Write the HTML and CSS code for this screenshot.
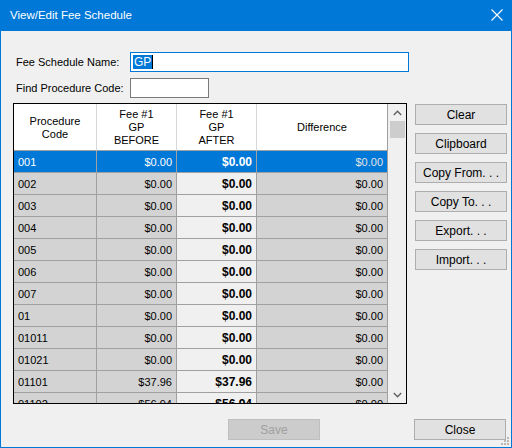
FILE: index.html
```html
<!DOCTYPE html>
<html>
<head>
<meta charset="utf-8">
<link rel="stylesheet" href="styles.css">
</head>
<body>
<div class="window">
  <div class="titlebar">
    <span class="title">View/Edit Fee Schedule</span>
    <svg class="close-x" width="12" height="12" viewBox="0 0 12 12"><path d="M0.5 0.5 L11.5 11.5 M11.5 0.5 L0.5 11.5" stroke="#fff" stroke-width="1.1" fill="none"/></svg>
  </div>
  <div class="content">
    <div class="field-row">
      <span class="label">Fee Schedule Name:</span>
      <div class="textbox focused wide"><span class="sel">GP</span><span class="caret"></span></div>
    </div>
    <div class="field-row second">
      <span class="label">Find Procedure Code:</span>
      <div class="textbox narrow"></div>
    </div>
    <div class="main">
      <div class="grid">
        <div class="table">
          <div class="row head">
            <div class="c c1">Procedure<br>Code</div>
            <div class="c c2">Fee #1<br>GP<br>BEFORE</div>
            <div class="c c3">Fee #1<br>GP<br>AFTER</div>
            <div class="c c4">Difference</div>
          </div>
          <div class="row data selected"><div class="c c1">001</div><div class="c c2">$0.00</div><div class="c c3">$0.00</div><div class="c c4">$0.00</div></div>
          <div class="row data"><div class="c c1">002</div><div class="c c2">$0.00</div><div class="c c3">$0.00</div><div class="c c4">$0.00</div></div>
          <div class="row data"><div class="c c1">003</div><div class="c c2">$0.00</div><div class="c c3">$0.00</div><div class="c c4">$0.00</div></div>
          <div class="row data"><div class="c c1">004</div><div class="c c2">$0.00</div><div class="c c3">$0.00</div><div class="c c4">$0.00</div></div>
          <div class="row data"><div class="c c1">005</div><div class="c c2">$0.00</div><div class="c c3">$0.00</div><div class="c c4">$0.00</div></div>
          <div class="row data"><div class="c c1">006</div><div class="c c2">$0.00</div><div class="c c3">$0.00</div><div class="c c4">$0.00</div></div>
          <div class="row data"><div class="c c1">007</div><div class="c c2">$0.00</div><div class="c c3">$0.00</div><div class="c c4">$0.00</div></div>
          <div class="row data"><div class="c c1">01</div><div class="c c2">$0.00</div><div class="c c3">$0.00</div><div class="c c4">$0.00</div></div>
          <div class="row data"><div class="c c1">01011</div><div class="c c2">$0.00</div><div class="c c3">$0.00</div><div class="c c4">$0.00</div></div>
          <div class="row data"><div class="c c1">01021</div><div class="c c2">$0.00</div><div class="c c3">$0.00</div><div class="c c4">$0.00</div></div>
          <div class="row data"><div class="c c1">01101</div><div class="c c2">$37.96</div><div class="c c3">$37.96</div><div class="c c4">$0.00</div></div>
          <div class="row data"><div class="c c1">01102</div><div class="c c2">$56.94</div><div class="c c3">$56.94</div><div class="c c4">$0.00</div></div>
        </div>
        <div class="scrollbar">
          <div class="arrow"><svg width="9" height="6" viewBox="0 0 9 6"><path d="M0.8 5 L4.5 1.3 L8.2 5" stroke="#606060" stroke-width="1.4" fill="none"/></svg></div>
          <div class="thumb"></div>
          <div class="track"></div>
          <div class="arrow"><svg width="9" height="6" viewBox="0 0 9 6"><path d="M0.8 1 L4.5 4.7 L8.2 1" stroke="#606060" stroke-width="1.4" fill="none"/></svg></div>
        </div>
      </div>
      <div class="side">
        <div class="btn">Clear</div>
        <div class="btn">Clipboard</div>
        <div class="btn">Copy From. . .</div>
        <div class="btn">Copy To. . .</div>
        <div class="btn">Export. . .</div>
        <div class="btn">Import. . .</div>
      </div>
    </div>
    <div class="bottom">
      <div class="btn disabled">Save</div>
      <div class="btn">Close</div>
    </div>
  </div>
  <svg class="grip" width="9" height="9" viewBox="0 0 9 9" fill="#b8b8b8">
    <rect x="6" y="0" width="2" height="2"/>
    <rect x="3" y="3" width="2" height="2"/><rect x="6" y="3" width="2" height="2"/>
    <rect x="0" y="6" width="2" height="2"/><rect x="3" y="6" width="2" height="2"/><rect x="6" y="6" width="2" height="2"/>
  </svg>
</div>
</body>
</html>
```
FILE: styles.css
```css
html, body {
  margin: 0;
  padding: 0;
  background: #f0f0f0;
}
.window {
  position: relative;
  width: 512px;
  height: 448px;
  box-sizing: border-box;
  border: 1px solid #0078d7;
  border-top: 0;
  background: #f0f0f0;
  font-family: "Liberation Sans", Arial, sans-serif;
  font-size: 11px;
  color: #000;
  overflow: hidden;
}
.titlebar {
  height: 31px;
  background: #0078d7;
  display: flex;
  align-items: center;
  justify-content: space-between;
  padding: 0 8px 0 9px;
  color: #fff;
}
.title {
  font-size: 11.5px;
  padding-bottom: 1px;
}
.close-x {
  display: block;
  margin-top: -1px;
}
.content {
  padding: 21px 0 0 12px;
}
.field-row {
  display: flex;
  align-items: center;
  height: 20px;
  padding-left: 3px;
}
.field-row.second {
  margin-top: 6px;
}
.label {
  width: 114px;
  flex: none;
}
.textbox {
  box-sizing: border-box;
  height: 20px;
  border: 1px solid #7a7a7a;
  background: #fff;
  display: flex;
  align-items: center;
  padding-left: 2px;
}
.textbox.focused {
  border-color: #0078d7;
}
.textbox.wide {
  width: 279px;
}
.textbox.narrow {
  width: 79px;
}
.sel {
  background: #0078d7;
  color: #fff;
  font-size: 12px;
  line-height: 14px;
  padding: 0 1px;
}
.caret {
  width: 1px;
  height: 14px;
  background: #000;
}
.main {
  display: flex;
  margin-top: 5px;
  gap: 8px;
}
.grid {
  box-sizing: border-box;
  width: 394px;
  height: 301px;
  border: 1px solid #000;
  display: flex;
  background: #f0f0f0;
}
.table {
  width: 374px;
  height: 299px;
  overflow: hidden;
  flex: none;
}
.row {
  display: flex;
}
.c {
  box-sizing: border-box;
  border-right: 1px solid #a0a0a0;
  border-bottom: 1px solid #a0a0a0;
  flex: none;
  display: flex;
  align-items: center;
}
.c1 { width: 83px; }
.c2 { width: 80px; }
.c3 { width: 80px; }
.c4 { width: 131px; }
.head .c {
  height: 47px;
  background: #fff;
  justify-content: center;
  text-align: center;
  line-height: 13px;
  border-right-color: #d8d8d8;
  border-bottom-color: #a0a0a0;
  padding-top: 1px;
}
.head .c4 {
  border-right-color: #a0a0a0;
}
.data .c {
  height: 22px;
  background: #d3d3d3;
  padding: 0 4px 0 4px;
  justify-content: flex-end;
}
.data .c1 {
  justify-content: flex-start;
}
.data .c3 {
  background: #f0f0f0;
  font-weight: bold;
  font-size: 12px;
}
.data.selected .c {
  background: #0078d7;
  color: #fff;
}
.data.selected .c4 {
  color: #e4e4e4;
}
.scrollbar {
  width: 18px;
  height: 299px;
  display: flex;
  flex-direction: column;
  align-items: center;
  background: #f0f0f0;
}
.arrow {
  height: 17px;
  width: 18px;
  display: flex;
  align-items: center;
  justify-content: center;
  flex: none;
}
.thumb {
  width: 15px;
  height: 17px;
  background: #cdcdcd;
  flex: none;
}
.track {
  flex: 1;
}
.side {
  display: flex;
  flex-direction: column;
  gap: 8px;
  padding-top: 1px;
}
.btn {
  box-sizing: border-box;
  width: 92px;
  height: 21px;
  border: 1px solid #adadad;
  background: #e1e1e1;
  display: flex;
  align-items: center;
  justify-content: center;
  font-size: 12px;
}
.btn.disabled {
  background: #cccccc;
  border-color: #bfbfbf;
  color: #a0a0a0;
}
.bottom {
  display: flex;
  margin-top: 15px;
  padding-left: 215px;
  gap: 94px;
}
.grip {
  position: absolute;
  right: 1px;
  bottom: 1px;
}
```
